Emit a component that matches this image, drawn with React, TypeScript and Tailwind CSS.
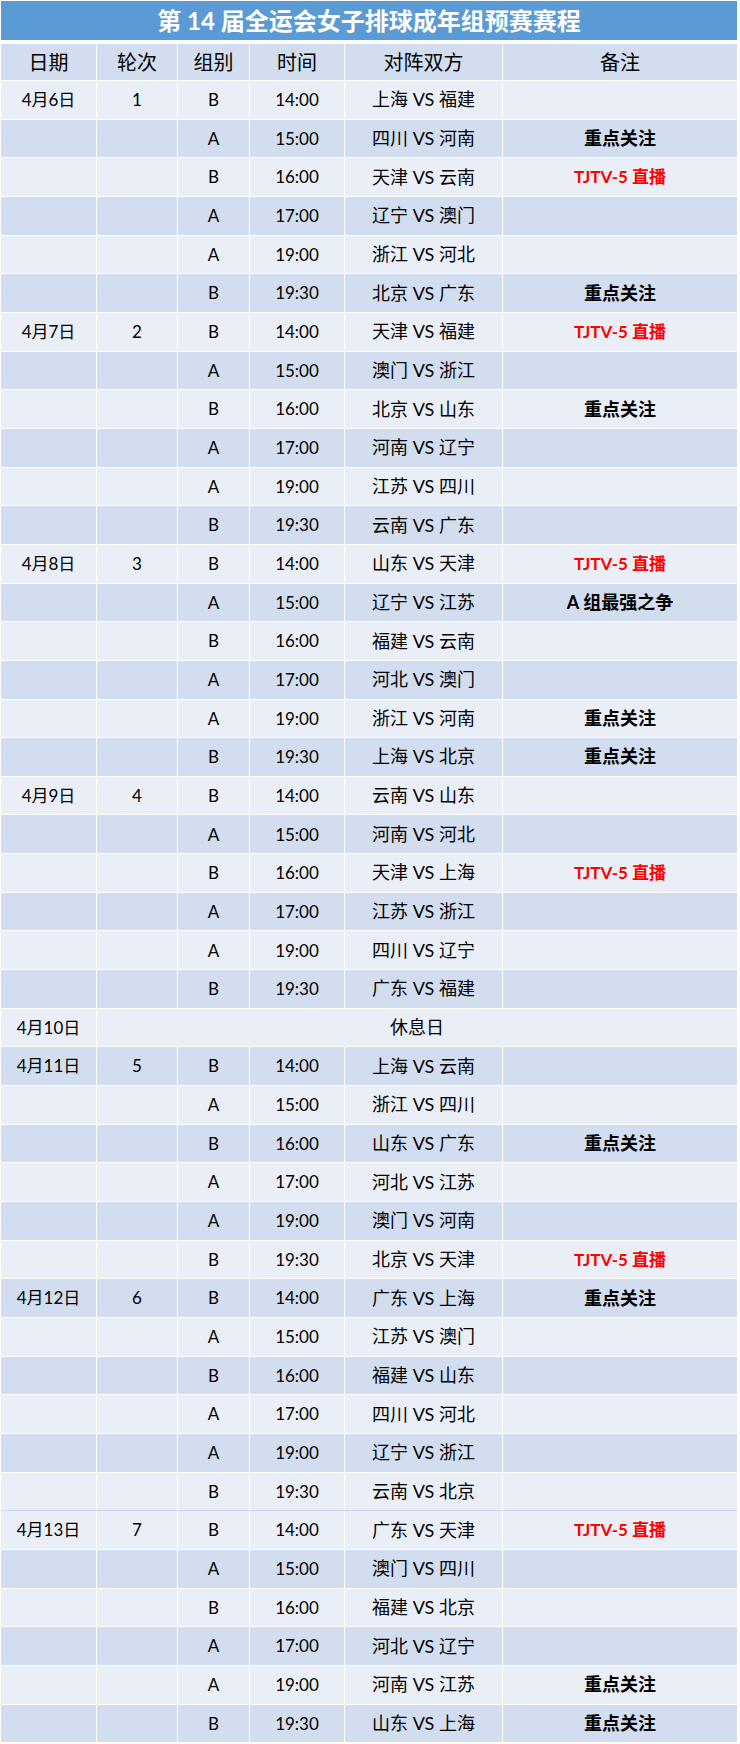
import React from "react";

type Match = { group: string; time: string; teams: [string, string]; note?: "focus" | "live" | "groupA" };
type Day = { date: string; round?: string; rest?: boolean; matches: Match[] };

const days: Day[] = [
  {
    date: "4月6日",
    round: "1",
    matches: [
      { group: "B", time: "14:00", teams: ["上海", "福建"] },
      { group: "A", time: "15:00", teams: ["四川", "河南"], note: "focus" },
      { group: "B", time: "16:00", teams: ["天津", "云南"], note: "live" },
      { group: "A", time: "17:00", teams: ["辽宁", "澳门"] },
      { group: "A", time: "19:00", teams: ["浙江", "河北"] },
      { group: "B", time: "19:30", teams: ["北京", "广东"], note: "focus" },
    ],
  },
  {
    date: "4月7日",
    round: "2",
    matches: [
      { group: "B", time: "14:00", teams: ["天津", "福建"], note: "live" },
      { group: "A", time: "15:00", teams: ["澳门", "浙江"] },
      { group: "B", time: "16:00", teams: ["北京", "山东"], note: "focus" },
      { group: "A", time: "17:00", teams: ["河南", "辽宁"] },
      { group: "A", time: "19:00", teams: ["江苏", "四川"] },
      { group: "B", time: "19:30", teams: ["云南", "广东"] },
    ],
  },
  {
    date: "4月8日",
    round: "3",
    matches: [
      { group: "B", time: "14:00", teams: ["山东", "天津"], note: "live" },
      { group: "A", time: "15:00", teams: ["辽宁", "江苏"], note: "groupA" },
      { group: "B", time: "16:00", teams: ["福建", "云南"] },
      { group: "A", time: "17:00", teams: ["河北", "澳门"] },
      { group: "A", time: "19:00", teams: ["浙江", "河南"], note: "focus" },
      { group: "B", time: "19:30", teams: ["上海", "北京"], note: "focus" },
    ],
  },
  {
    date: "4月9日",
    round: "4",
    matches: [
      { group: "B", time: "14:00", teams: ["云南", "山东"] },
      { group: "A", time: "15:00", teams: ["河南", "河北"] },
      { group: "B", time: "16:00", teams: ["天津", "上海"], note: "live" },
      { group: "A", time: "17:00", teams: ["江苏", "浙江"] },
      { group: "A", time: "19:00", teams: ["四川", "辽宁"] },
      { group: "B", time: "19:30", teams: ["广东", "福建"] },
    ],
  },
  { date: "4月10日", rest: true, matches: [] },
  {
    date: "4月11日",
    round: "5",
    matches: [
      { group: "B", time: "14:00", teams: ["上海", "云南"] },
      { group: "A", time: "15:00", teams: ["浙江", "四川"] },
      { group: "B", time: "16:00", teams: ["山东", "广东"], note: "focus" },
      { group: "A", time: "17:00", teams: ["河北", "江苏"] },
      { group: "A", time: "19:00", teams: ["澳门", "河南"] },
      { group: "B", time: "19:30", teams: ["北京", "天津"], note: "live" },
    ],
  },
  {
    date: "4月12日",
    round: "6",
    matches: [
      { group: "B", time: "14:00", teams: ["广东", "上海"], note: "focus" },
      { group: "A", time: "15:00", teams: ["江苏", "澳门"] },
      { group: "B", time: "16:00", teams: ["福建", "山东"] },
      { group: "A", time: "17:00", teams: ["四川", "河北"] },
      { group: "A", time: "19:00", teams: ["辽宁", "浙江"] },
      { group: "B", time: "19:30", teams: ["云南", "北京"] },
    ],
  },
  {
    date: "4月13日",
    round: "7",
    matches: [
      { group: "B", time: "14:00", teams: ["广东", "天津"], note: "live" },
      { group: "A", time: "15:00", teams: ["澳门", "四川"] },
      { group: "B", time: "16:00", teams: ["福建", "北京"] },
      { group: "A", time: "17:00", teams: ["河北", "辽宁"] },
      { group: "A", time: "19:00", teams: ["河南", "江苏"], note: "focus" },
      { group: "B", time: "19:30", teams: ["山东", "上海"], note: "focus" },
    ],
  },
];

const cols = "grid grid-cols-[95px_80px_71px_94px_157px_234px] gap-px";
const cell = "flex items-center justify-center";

// the sheet was captured in two parts, stripes restart at row 37
const SPLIT = 37;

function Note({ note }: { note?: Match["note"] }) {
  if (note === "focus") return <span className="font-bold text-[18px]">重点关注</span>;
  if (note === "groupA") return <span className="font-bold text-[18px]">A 组最强之争</span>;
  if (note === "live") return <span className="font-bold text-[17px] text-[#ff0000]">TJTV-5 直播</span>;
  return null;
}

export default function App() {
  let idx = 0;
  const rows: React.ReactNode[] = [];
  const stripe = (i: number) => {
    const odd = i >= SPLIT ? (i + 1) % 2 : i % 2;
    return odd ? "bg-[#d2deef]" : "bg-[#eaeff7]";
  };
  const divider = (i: number) =>
    i === SPLIT ? (
      <div key={`line-${i}`} className="h-px bg-[#cfd7ef]" />
    ) : null;

  days.forEach((d) => {
    if (d.rest) {
      const bg = stripe(idx);
      rows.push(
        <div key={d.date} className="grid grid-cols-[95px_640px] gap-px h-[37.67px] mt-px">
          <div className={`${cell} ${bg}`}>{d.date}</div>
          <div className={`${cell} ${bg} text-[18px]`}>休息日</div>
        </div>
      );
      idx++;
      return;
    }
    d.matches.forEach((m, i) => {
      const bg = stripe(idx);
      const line = divider(idx);
      if (line) rows.push(line);
      rows.push(
        <div key={`${d.date}-${i}`} className={`${cols} h-[37.67px] ${line ? "" : "mt-px"}`}>
          <div className={`${cell} ${bg}`}>{i === 0 ? d.date : ""}</div>
          <div className={`${cell} ${bg}`}>{i === 0 ? d.round : ""}</div>
          <div className={`${cell} ${bg}`}>{m.group}</div>
          <div className={`${cell} ${bg}`}>{m.time}</div>
          <div className={`${cell} ${bg} text-[18px]`}>
            {m.teams[0]} VS {m.teams[1]}
          </div>
          <div className={`${cell} ${bg}`}>
            <Note note={m.note} />
          </div>
        </div>
      );
      idx++;
    });
  });

  return (
    <div
      className="w-[740px] h-[1744px] overflow-hidden bg-white pl-px pt-px text-black text-[17px]"
      style={{ fontFamily: 'Lato, "Noto Sans CJK SC", sans-serif' }}
    >
      <div className="w-[736px]">
        <div className="h-[39px] bg-[#5b9bd5] flex items-center justify-center text-white font-bold text-[24px]">
          第 14 届全运会女子排球成年组预赛赛程
        </div>
        <div className={`${cols} mt-[4px] h-[36px] text-[20px]`}>
          {["日期", "轮次", "组别", "时间", "对阵双方", "备注"].map((h) => (
            <div key={h} className={`${cell} bg-[#d2deef]`}>
              {h}
            </div>
          ))}
        </div>
        <div className="flex flex-col">{rows}</div>
      </div>
    </div>
  );
}
